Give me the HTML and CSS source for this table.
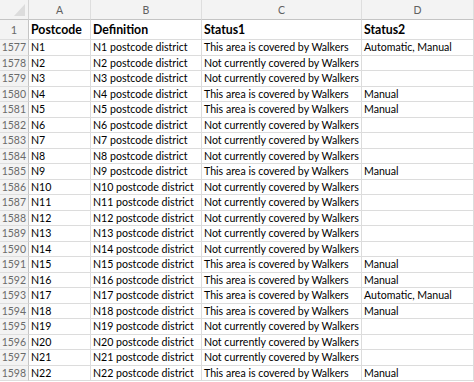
FILE: index.html
```html
<!DOCTYPE html>
<html>
<head>
<meta charset="utf-8">
<link rel="stylesheet" href="styles.css">
</head>
<body>
<div class="sheet">
  <div class="corner"><span class="tri"></span></div>
  <div class="col-head">A</div>
  <div class="col-head">B</div>
  <div class="col-head">C</div>
  <div class="col-head">D</div>

  <div class="row-head title-row">1</div>
  <div class="cell bold">Postcode</div>
  <div class="cell bold">Definition</div>
  <div class="cell bold">Status1</div>
  <div class="cell bold">Status2</div>

  <div class="row-head">1577</div><div class="cell">N1</div><div class="cell">N1 postcode district</div><div class="cell">This area is covered by Walkers</div><div class="cell">Automatic, Manual</div>
  <div class="row-head">1578</div><div class="cell">N2</div><div class="cell">N2 postcode district</div><div class="cell">Not currently covered by Walkers</div><div class="cell"></div>
  <div class="row-head">1579</div><div class="cell">N3</div><div class="cell">N3 postcode district</div><div class="cell">Not currently covered by Walkers</div><div class="cell"></div>
  <div class="row-head">1580</div><div class="cell">N4</div><div class="cell">N4 postcode district</div><div class="cell">This area is covered by Walkers</div><div class="cell">Manual</div>
  <div class="row-head">1581</div><div class="cell">N5</div><div class="cell">N5 postcode district</div><div class="cell">This area is covered by Walkers</div><div class="cell">Manual</div>
  <div class="row-head">1582</div><div class="cell">N6</div><div class="cell">N6 postcode district</div><div class="cell">Not currently covered by Walkers</div><div class="cell"></div>
  <div class="row-head">1583</div><div class="cell">N7</div><div class="cell">N7 postcode district</div><div class="cell">Not currently covered by Walkers</div><div class="cell"></div>
  <div class="row-head">1584</div><div class="cell">N8</div><div class="cell">N8 postcode district</div><div class="cell">Not currently covered by Walkers</div><div class="cell"></div>
  <div class="row-head">1585</div><div class="cell">N9</div><div class="cell">N9 postcode district</div><div class="cell">This area is covered by Walkers</div><div class="cell">Manual</div>
  <div class="row-head">1586</div><div class="cell">N10</div><div class="cell">N10 postcode district</div><div class="cell">Not currently covered by Walkers</div><div class="cell"></div>
  <div class="row-head">1587</div><div class="cell">N11</div><div class="cell">N11 postcode district</div><div class="cell">Not currently covered by Walkers</div><div class="cell"></div>
  <div class="row-head">1588</div><div class="cell">N12</div><div class="cell">N12 postcode district</div><div class="cell">Not currently covered by Walkers</div><div class="cell"></div>
  <div class="row-head">1589</div><div class="cell">N13</div><div class="cell">N13 postcode district</div><div class="cell">Not currently covered by Walkers</div><div class="cell"></div>
  <div class="row-head">1590</div><div class="cell">N14</div><div class="cell">N14 postcode district</div><div class="cell">Not currently covered by Walkers</div><div class="cell"></div>
  <div class="row-head">1591</div><div class="cell">N15</div><div class="cell">N15 postcode district</div><div class="cell">This area is covered by Walkers</div><div class="cell">Manual</div>
  <div class="row-head">1592</div><div class="cell">N16</div><div class="cell">N16 postcode district</div><div class="cell">This area is covered by Walkers</div><div class="cell">Manual</div>
  <div class="row-head">1593</div><div class="cell">N17</div><div class="cell">N17 postcode district</div><div class="cell">This area is covered by Walkers</div><div class="cell">Automatic, Manual</div>
  <div class="row-head">1594</div><div class="cell">N18</div><div class="cell">N18 postcode district</div><div class="cell">This area is covered by Walkers</div><div class="cell">Manual</div>
  <div class="row-head">1595</div><div class="cell">N19</div><div class="cell">N19 postcode district</div><div class="cell">Not currently covered by Walkers</div><div class="cell"></div>
  <div class="row-head">1596</div><div class="cell">N20</div><div class="cell">N20 postcode district</div><div class="cell">Not currently covered by Walkers</div><div class="cell"></div>
  <div class="row-head">1597</div><div class="cell">N21</div><div class="cell">N21 postcode district</div><div class="cell">Not currently covered by Walkers</div><div class="cell"></div>
  <div class="row-head">1598</div><div class="cell">N22</div><div class="cell">N22 postcode district</div><div class="cell">This area is covered by Walkers</div><div class="cell">Manual</div>
</div>
</body>
</html>
```

FILE: styles.css
```css
html, body {
  margin: 0;
  padding: 0;
  background: #ffffff;
}
body {
  font-family: Lato, "Open Sans", sans-serif;
  color: #000000;
  overflow: hidden;
}
.sheet {
  display: grid;
  grid-template-columns: 29px 62px 111px 160px 112px;
  grid-template-rows: 20px 20px repeat(22, 15.5px);
  width: 474px;
}
.corner {
  position: relative;
  background: #f3f3f3;
  border-right: 1px solid #d4d4d4;
  border-bottom: 1px solid #c4c4c4;
  box-sizing: border-box;
}
.tri {
  position: absolute;
  right: 3px;
  bottom: 3px;
  width: 0;
  height: 0;
  border-left: 11px solid transparent;
  border-bottom: 12px solid #dcdcdc;
}
.col-head {
  background: #f3f3f3;
  border-right: 1px solid #dedede;
  border-bottom: 1px solid #c4c4c4;
  box-sizing: border-box;
  color: #606060;
  font-size: 10.5px;
  display: flex;
  align-items: center;
  justify-content: center;
  padding-top: 1px;
}
.row-head {
  background: #f3f3f3;
  border-right: 1px solid #c4c4c4;
  border-bottom: 1px solid #dedede;
  box-sizing: border-box;
  color: #6a6a6a;
  font-size: 10.5px;
  display: flex;
  align-items: center;
  justify-content: flex-end;
  padding-right: 2px;
}
.row-head.title-row {
  font-size: 11px;
  justify-content: center;
  padding-right: 0;
}
.cell {
  border-right: 1px solid #dcdcdc;
  border-bottom: 1px solid #dcdcdc;
  box-sizing: border-box;
  font-size: 10.6px;
  display: flex;
  align-items: center;
  padding-left: 2px;
  white-space: nowrap;
  overflow: hidden;
}
.bold {
  font-weight: bold;
  font-size: 12.3px;
}
```
